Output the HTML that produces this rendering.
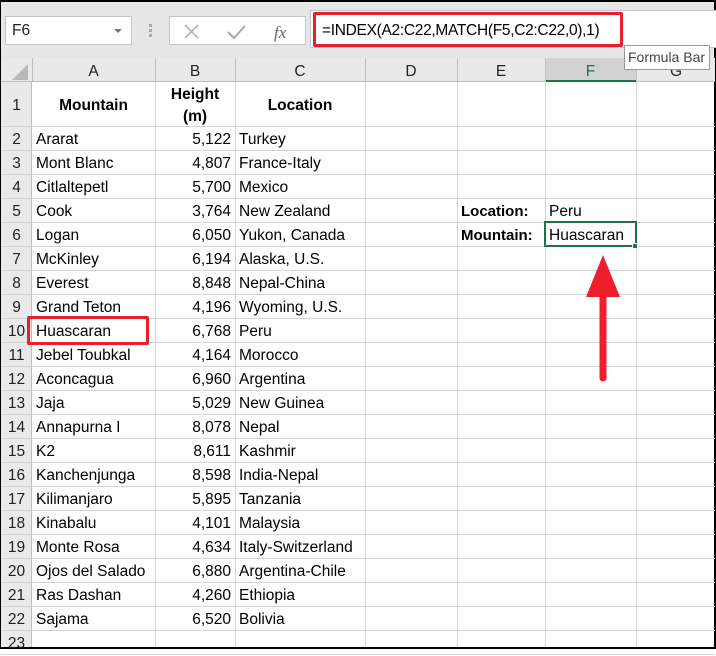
<!DOCTYPE html>
<html><head><style>
*{margin:0;padding:0;box-sizing:border-box}
body{width:716px;height:649px;overflow:hidden;background:#fff;font-family:"Liberation Sans",sans-serif;position:relative}
.a{position:absolute}
.t{position:absolute;font-size:15.5px;color:#000;line-height:24px;white-space:nowrap;padding-top:2px}
.hl{position:absolute;height:1px;background:#d4d4d4}
.vl{position:absolute;width:1px;background:#d4d4d4}
.ch{position:absolute;top:58px;height:24px;font-size:15.5px;line-height:24px;text-align:center;color:#222;padding-top:2px}
.rh{position:absolute;left:1px;width:31px;font-size:15.5px;line-height:24px;text-align:center;color:#222;padding-top:2px}
</style></head><body>
<div class="a" style="left:0;top:0;width:716px;height:58px;background:#e6e6e6"></div>
<div class="a" style="left:0;top:0;width:716px;height:2px;background:#000"></div>
<div class="a" style="left:0;top:0;width:1px;height:649px;background:#000"></div>
<div class="a" style="left:714px;top:0;width:2px;height:649px;background:#000"></div>
<div class="a" style="left:0;top:647px;width:716px;height:2px;background:#000"></div>
<div class="a" style="left:5px;top:16px;width:127px;height:29px;background:#fff;border:1px solid #c6c6c6"></div>
<div class="t" style="left:12px;top:17px;color:#222">F6</div>
<div class="a" style="left:114px;top:29px;width:0;height:0;border-left:4px solid transparent;border-right:4px solid transparent;border-top:4px solid #777"></div>
<div class="a" style="left:149px;top:24px;width:3px;height:3px;background:#aaa"></div>
<div class="a" style="left:149px;top:29px;width:3px;height:3px;background:#aaa"></div>
<div class="a" style="left:149px;top:34px;width:3px;height:3px;background:#aaa"></div>
<div class="a" style="left:169px;top:16px;width:137px;height:29px;background:#fff;border:1px solid #c6c6c6"></div>
<svg class="a" style="left:183px;top:22px" width="110" height="20"><path d="M2 3L15 16M15 3L2 16" stroke="#aaa" stroke-width="1.5"/><path d="M45 10L51 16L62 4" stroke="#aaa" stroke-width="2" fill="none"/><text x="91" y="16" font-family="Liberation Serif" font-style="italic" font-size="17" fill="#666">fx</text></svg>
<div class="a" style="left:310px;top:10px;width:410px;height:38px;background:#fff;border:1px solid #c6c6c6"></div>
<div class="a" style="left:313px;top:12px;width:310px;height:35px;border:3px solid #e8202a;border-radius:2px"></div>
<div class="t" style="left:322px;top:17px;font-size:15.5px;letter-spacing:-0.3px">=INDEX(A2:C22,MATCH(F5,C2:C22,0),1)</div>
<div class="a" style="left:1px;top:58px;width:714px;height:24px;background:#e9e9e9;border-bottom:1px solid #bdbdbd"></div>
<div class="a" style="left:1px;top:82px;width:31px;height:565px;background:#e9e9e9;border-right:1px solid #bdbdbd"></div>
<div class="a" style="left:12px;top:64px;width:0;height:0;border-left:16px solid transparent;border-bottom:16px solid #b8b8b8"></div>
<div class="a" style="left:545px;top:58px;width:91px;height:24px;background:#d2d2d2;border-bottom:2px solid #217346"></div>
<div class="ch" style="left:32px;width:123px">A</div>
<div class="ch" style="left:155px;width:80px">B</div>
<div class="ch" style="left:235px;width:130px">C</div>
<div class="ch" style="left:365px;width:92px">D</div>
<div class="ch" style="left:457px;width:88px">E</div>
<div class="ch" style="left:545px;width:91px;color:#217346">F</div>
<div class="ch" style="left:636px;width:80px">G</div>
<div class="vl" style="left:32px;top:58px;height:24px;background:#bdbdbd"></div>
<div class="vl" style="left:155px;top:58px;height:24px;background:#bdbdbd"></div>
<div class="vl" style="left:235px;top:58px;height:24px;background:#bdbdbd"></div>
<div class="vl" style="left:365px;top:58px;height:24px;background:#bdbdbd"></div>
<div class="vl" style="left:457px;top:58px;height:24px;background:#bdbdbd"></div>
<div class="vl" style="left:545px;top:58px;height:24px;background:#bdbdbd"></div>
<div class="vl" style="left:636px;top:58px;height:24px;background:#bdbdbd"></div>
<div class="vl" style="left:155px;top:82px;height:565px"></div>
<div class="vl" style="left:235px;top:82px;height:565px"></div>
<div class="vl" style="left:365px;top:82px;height:565px"></div>
<div class="vl" style="left:457px;top:82px;height:565px"></div>
<div class="vl" style="left:545px;top:82px;height:565px"></div>
<div class="vl" style="left:636px;top:82px;height:565px"></div>
<div id="g"></div>
<div class="rh" style="top:92px">1</div>
<div class="t" style="left:32px;width:123px;text-align:center;top:92px;font-weight:bold">Mountain</div>
<div class="t" style="left:155px;width:80px;text-align:center;top:82px;font-weight:bold;line-height:22px">Height<br>(m)</div>
<div class="t" style="left:235px;width:130px;text-align:center;top:92px;font-weight:bold">Location</div>
<script>
var d=[["Ararat","5,122","Turkey"],["Mont Blanc","4,807","France-Italy"],["Citlaltepetl","5,700","Mexico"],["Cook","3,764","New Zealand"],["Logan","6,050","Yukon, Canada"],["McKinley","6,194","Alaska, U.S."],["Everest","8,848","Nepal-China"],["Grand Teton","4,196","Wyoming, U.S."],["Huascaran","6,768","Peru"],["Jebel Toubkal","4,164","Morocco"],["Aconcagua","6,960","Argentina"],["Jaja","5,029","New Guinea"],["Annapurna I","8,078","Nepal"],["K2","8,611","Kashmir"],["Kanchenjunga","8,598","India-Nepal"],["Kilimanjaro","5,895","Tanzania"],["Kinabalu","4,101","Malaysia"],["Monte Rosa","4,634","Italy-Switzerland"],["Ojos del Salado","6,880","Argentina-Chile"],["Ras Dashan","4,260","Ethiopia"],["Sajama","6,520","Bolivia"]];
var h='<div class="hl" style="left:1px;width:714px;top:126px"></div>';
for(var i=0;i<22;i++){var y=126+i*24;h+='<div class="hl" style="left:1px;width:714px;top:'+(y+24)+'px"></div>';h+='<div class="rh" style="top:'+y+'px">'+(i+2)+'</div>';
if(i<21){h+='<div class="t" style="left:36px;top:'+y+'px">'+d[i][0]+'</div><div class="t" style="left:155px;width:76px;text-align:right;top:'+y+'px">'+d[i][1]+'</div><div class="t" style="left:239px;top:'+y+'px">'+d[i][2]+'</div>';}}
document.getElementById('g').innerHTML=h;
</script>
<div class="t" style="left:461px;top:198px;font-weight:bold;font-size:15px">Location:</div>
<div class="t" style="left:549px;top:198px">Peru</div>
<div class="t" style="left:461px;top:222px;font-weight:bold;font-size:15px">Mountain:</div>
<div class="a" style="left:544px;top:221px;width:93px;height:26px;border:2px solid #217346"></div>
<div class="a" style="left:632px;top:243px;width:6px;height:6px;background:#217346;border:1px solid #fff"></div>
<div class="t" style="left:549px;top:222px">Huascaran</div>
<div class="a" style="left:27px;top:316px;width:122px;height:29px;border:3px solid #e8202a;border-radius:2px"></div>
<svg class="a" style="left:580px;top:250px" width="50" height="140"><polygon points="23,5 40,47 6,47" fill="#ee1f2a"/><line x1="23" y1="40" x2="23" y2="128" stroke="#ee1f2a" stroke-width="7" stroke-linecap="round"/></svg>
<div class="a" style="left:624px;top:45px;width:86px;height:25px;background:#fff;border:1px solid #999;font-size:14px;line-height:23px;padding-left:3px;color:#444">Formula Bar</div>
</body></html>
